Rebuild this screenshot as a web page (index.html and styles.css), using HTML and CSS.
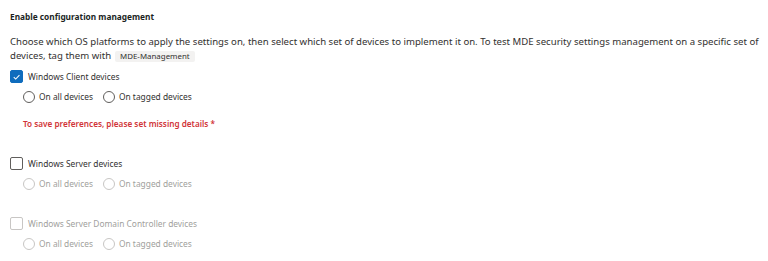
FILE: index.html
```html
<!DOCTYPE html>
<html>
<head>
<meta charset="utf-8">
<link rel="stylesheet" href="styles.css">
</head>
<body>
<div class="page">
  <h3 class="title">Enable configuration management</h3>
  <div class="desc">
    <div class="line">Choose which OS platforms to apply the settings on, then select which set of devices to implement it on. To test MDE security settings management on a specific set of</div>
    <div class="line line2"><span>devices, tag them with</span><code class="tag">MDE-Management</code></div>
  </div>

  <div class="group">
    <div class="check-row">
      <span class="box checked"><svg viewBox="0 0 12 12" width="12" height="12"><path d="M3 6.2 L5.1 8.2 L9.2 3.9" fill="none" stroke="#fff" stroke-width="1.1"/></svg></span>
      <span class="label">Windows Client devices</span>
    </div>
    <div class="radios">
      <span class="radio-item"><span class="circle"></span>On all devices</span>
      <span class="radio-item"><span class="circle"></span>On tagged devices</span>
    </div>
    <div class="error">To save preferences, please set missing details *</div>
  </div>

  <div class="group second">
    <div class="check-row">
      <span class="box"></span>
      <span class="label">Windows Server devices</span>
    </div>
    <div class="radios disabled">
      <span class="radio-item"><span class="circle"></span>On all devices</span>
      <span class="radio-item"><span class="circle"></span>On tagged devices</span>
    </div>
  </div>

  <div class="group third disabled">
    <div class="check-row">
      <span class="box"></span>
      <span class="label">Windows Server Domain Controller devices</span>
    </div>
    <div class="radios">
      <span class="radio-item"><span class="circle"></span>On all devices</span>
      <span class="radio-item"><span class="circle"></span>On tagged devices</span>
    </div>
  </div>
</div>
</body>
</html>
```
FILE: styles.css
```css
html, body {
  margin: 0;
  padding: 0;
  background: #ffffff;
}
.page {
  font-family: "Noto Sans", "Open Sans", sans-serif;
  color: #323130;
  padding: 10px 8px 0 10px;
}
.title {
  margin: 0;
  font-size: 8.3px;
  font-weight: 700;
  line-height: 13px;
  color: #201f1e;
}
.desc {
  margin: 12px 0 0 0;
  font-size: 9.6px;
  line-height: 14px;
  color: #323130;
}
.line {
  white-space: nowrap;
}
.line2 {
  display: flex;
  align-items: center;
  gap: 4px;
}
.tag {
  display: inline-block;
  background: #f3f2f1;
  font-family: "Noto Sans", "Open Sans", sans-serif;
  font-size: 7.9px;
  line-height: 11px;
  padding: 0 5px;
  border-radius: 2px;
  color: #323130;
}
.group {
  margin-top: 7px;
}
.check-row {
  display: flex;
  align-items: center;
  gap: 5px;
  height: 13px;
}
.box {
  width: 11px;
  height: 11px;
  border: 1px solid #605e5c;
  border-radius: 2px;
  display: flex;
  align-items: center;
  justify-content: center;
  box-sizing: content-box;
}
.box.checked {
  background: #0f6cbd;
  border-color: #0f6cbd;
}
.label {
  font-size: 8.4px;
  line-height: 13px;
}
.radios {
  display: flex;
  gap: 10px;
  margin-top: 7px;
  padding-left: 13px;
  font-size: 8.4px;
  line-height: 13px;
}
.radio-item {
  display: flex;
  align-items: center;
  gap: 4px;
}
.circle {
  width: 10px;
  height: 10px;
  border: 1px solid #605e5c;
  border-radius: 50%;
  box-sizing: content-box;
}
.error {
  margin-top: 14px;
  padding-left: 13px;
  font-size: 8.2px;
  line-height: 13px;
  font-weight: 600;
  color: #d13438;
}
.second {
  margin-top: 27px;
}
.third {
  margin-top: 27px;
}
.disabled .radio-item,
.disabled .label {
  color: #a19f9d;
}
.disabled .circle,
.disabled .box {
  border-color: #c8c6c4;
}
.radios.disabled .radio-item {
  color: #a19f9d;
}
.radios.disabled .circle {
  border-color: #c8c6c4;
}
```
